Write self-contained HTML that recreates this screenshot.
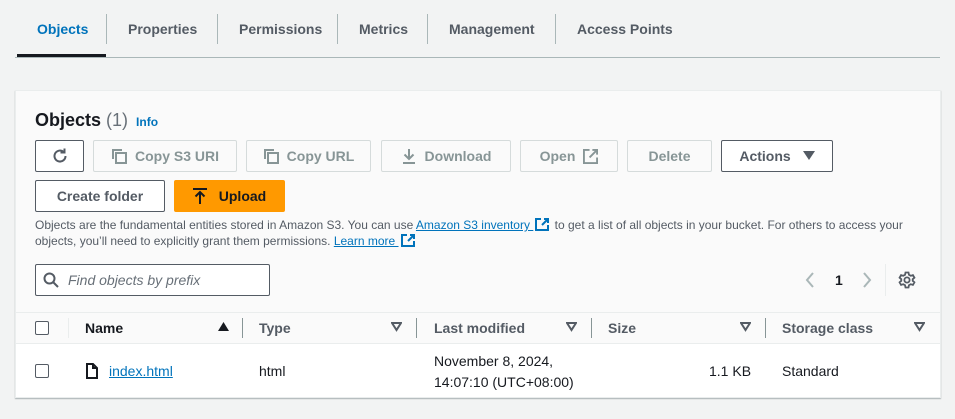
<!DOCTYPE html>
<html><head><meta charset="utf-8"><style>
*{box-sizing:border-box;margin:0;padding:0}
body{width:955px;height:419px;background:#f2f3f3;font-family:"Liberation Sans",sans-serif;position:relative;overflow:hidden;color:#16191f}
.a{position:absolute}
.tab{position:absolute;top:21px;font-size:14px;font-weight:bold;color:#545b64}
.sep{position:absolute;top:14px;width:1px;height:30px;background:#aab7b8}
.btn{position:absolute;height:32px;border:1px solid #d5dbdb;border-radius:2px;font-size:14px;font-weight:bold;color:#879596;display:flex;align-items:center;justify-content:center;gap:8px;background:#fafafa}
.btn.on{border-color:#545b64;color:#545b64;background:#fff}
.th{position:absolute;top:320px;font-size:14px;font-weight:bold;color:#545b64}
.cs{position:absolute;top:318px;width:1px;height:20px;background:#879596}
.cb{position:absolute;width:14px;height:14px;border:1px solid #545b64;border-radius:2px;background:#fff}
.tri{position:absolute;top:322px}
a{color:#0073bb;text-decoration:underline}
.ext{display:inline-block;vertical-align:-2px;margin:0 2px}
</style></head><body>
<div class="tab" style="left:37px;color:#0073bb">Objects</div>
<div class="sep" style="left:106px"></div>
<div class="tab" style="left:128px">Properties</div>
<div class="sep" style="left:217px"></div>
<div class="tab" style="left:239px">Permissions</div>
<div class="sep" style="left:337px"></div>
<div class="tab" style="left:359px">Metrics</div>
<div class="sep" style="left:427px"></div>
<div class="tab" style="left:449px">Management</div>
<div class="sep" style="left:555px"></div>
<div class="tab" style="left:577px">Access Points</div>
<div class="a" style="left:15px;top:57px;width:925px;height:1px;background:#aab7b8"></div>
<div class="a" style="left:17px;top:54px;width:89px;height:3px;background:#16191f"></div>

<div class="a" style="left:15px;top:90px;width:926px;height:308px;background:#fafafa;border:1px solid #eaeded;box-shadow:0 1px 1px rgba(0,28,36,.3)"></div>
<div class="a" style="left:35px;top:110px;font-size:18px;font-weight:bold">Objects <span style="font-weight:normal;color:#687078">(1)</span> <span style="font-size:12px;color:#0073bb;margin-left:3px">Info</span></div>

<div class="btn on" style="left:35px;top:140px;width:49px"><svg width="18" height="18" viewBox="0 0 18 18" fill="none" stroke="#545b64" stroke-width="2"><path d="M14.5 9A5.5 5.5 0 1 1 12.5 4.8"/><path d="M13.5 1.5v4h-4"/></svg></div>
<div class="btn" style="left:93px;top:140px;width:144px"><svg width="16" height="16" viewBox="0 0 16 16" fill="none" stroke="#879596" stroke-width="2"><path d="M2 11V2h9"/><rect x="5" y="5" width="10" height="10"/></svg>Copy S3 URI</div>
<div class="btn" style="left:246px;top:140px;width:125px"><svg width="16" height="16" viewBox="0 0 16 16" fill="none" stroke="#879596" stroke-width="2"><path d="M2 11V2h9"/><rect x="5" y="5" width="10" height="10"/></svg>Copy URL</div>
<div class="btn" style="left:381px;top:140px;width:130px"><svg width="16" height="16" viewBox="0 0 16 16" fill="none" stroke="#879596" stroke-width="2"><path d="M8 1v10M3.5 6.5 8 11l4.5-4.5M2 15h12"/></svg>Download</div>
<div class="btn" style="left:520px;top:140px;width:98px">Open <svg width="15" height="15" viewBox="0 0 16 16" fill="none" stroke="#879596" stroke-width="2"><path d="M7 1H1v14h14V9M10 1h5v5M15 1 7 9"/></svg></div>
<div class="btn" style="left:627px;top:140px;width:85px">Delete</div>
<div class="btn on" style="left:721px;top:140px;width:112px;gap:12px">Actions <svg width="12" height="10" viewBox="0 0 12 10"><path d="M0 0h12L6 9z" fill="#545b64"/></svg></div>

<div class="btn on" style="left:35px;top:180px;width:130px">Create folder</div>
<div class="btn" style="left:174px;top:180px;width:111px;background:#ff9900;border-color:#ff9900;color:#16191f;gap:12px"><svg width="14" height="16" viewBox="0 0 14 16" fill="none" stroke="#16191f" stroke-width="2"><path d="M0 1h14M7 4v12M2.5 8.5 7 4l4.5 4.5"/></svg>Upload</div>

<div class="a" style="left:35px;top:217px;font-size:12px;line-height:16px;color:#545b64;width:900px">Objects are the fundamental entities stored in Amazon S3. You can use <a>Amazon S3 inventory </a><svg class="ext" width="14" height="13" viewBox="0 0 14 13" fill="none" stroke="#0073bb" stroke-width="2"><path d="M6 1H1v11h12V7M9 1h4v4M13 1 7 7"/></svg> to get a list of all objects in your bucket. For others to access your objects, you’ll need to explicitly grant them permissions. <a>Learn more </a><svg class="ext" width="14" height="13" viewBox="0 0 14 13" fill="none" stroke="#0073bb" stroke-width="2"><path d="M6 1H1v11h12V7M9 1h4v4M13 1 7 7"/></svg></div>

<div class="a" style="left:35px;top:264px;width:235px;height:32px;border:1px solid #545b64;border-radius:2px;background:#fff"></div>
<svg class="a" style="left:43px;top:272px" width="16" height="16" viewBox="0 0 16 16" fill="none" stroke="#545b64" stroke-width="2"><circle cx="6.5" cy="6.5" r="5"/><path d="M10 10l5 5"/></svg>
<div class="a" style="left:68px;top:272px;font-size:14px;font-style:italic;color:#687078">Find objects by prefix</div>

<svg class="a" style="left:805px;top:272px" width="10" height="16" viewBox="0 0 10 16" fill="none" stroke="#aab7b8" stroke-width="2"><path d="M8 1 2 8l6 7"/></svg>
<div class="a" style="left:835px;top:272px;font-size:14px;font-weight:bold">1</div>
<svg class="a" style="left:862px;top:272px" width="10" height="16" viewBox="0 0 10 16" fill="none" stroke="#aab7b8" stroke-width="2"><path d="M2 1l6 7-6 7"/></svg>
<div class="a" style="left:885px;top:264px;width:1px;height:32px;background:#eaeded"></div>
<svg class="a" style="left:898px;top:271px" width="18" height="18" viewBox="0 0 24 24" fill="none" stroke="#545b64" stroke-width="2.4"><circle cx="12" cy="12" r="3.5"/><path d="M10 2h4l.6 3 2.4 1.4 2.9-1 2 3.5-2.3 2v2.2l2.3 2-2 3.5-2.9-1-2.4 1.4-.6 3h-4l-.6-3L7 17.6l-2.9 1-2-3.5 2.3-2v-2.2l-2.3-2 2-3.5 2.9 1L9.4 5z"/></svg>

<div class="a" style="left:16px;top:312px;width:924px;height:1px;background:#eaeded"></div>
<div class="a" style="left:16px;top:343px;width:924px;height:1px;background:#eaeded"></div>
<div class="a" style="left:16px;top:344px;width:924px;height:53px;background:#fff"></div>
<div class="cb" style="left:35px;top:321px"></div>
<div class="a" style="left:68px;top:318px;width:1px;height:20px;background:#eaeded"></div>
<div class="th" style="left:85px;color:#16191f">Name</div>
<svg class="tri" style="left:218px" width="11" height="10" viewBox="0 0 11 10"><path d="M0 9h11L5.5 0z" fill="#16191f"/></svg>
<div class="cs" style="left:242px"></div>
<div class="th" style="left:259px">Type</div>
<svg class="tri" style="left:391px" width="11" height="10" viewBox="0 0 11 10" fill="none" stroke="#545b64" stroke-width="2"><path d="M1 1h9L5.5 8z"/></svg>
<div class="cs" style="left:416px"></div>
<div class="th" style="left:434px">Last modified</div>
<svg class="tri" style="left:566px" width="11" height="10" viewBox="0 0 11 10" fill="none" stroke="#545b64" stroke-width="2"><path d="M1 1h9L5.5 8z"/></svg>
<div class="cs" style="left:591px"></div>
<div class="th" style="left:608px">Size</div>
<svg class="tri" style="left:740px" width="11" height="10" viewBox="0 0 11 10" fill="none" stroke="#545b64" stroke-width="2"><path d="M1 1h9L5.5 8z"/></svg>
<div class="cs" style="left:765px"></div>
<div class="th" style="left:782px">Storage class</div>
<svg class="tri" style="left:914px" width="11" height="10" viewBox="0 0 11 10" fill="none" stroke="#545b64" stroke-width="2"><path d="M1 1h9L5.5 8z"/></svg>

<div class="cb" style="left:35px;top:364px"></div>
<svg class="a" style="left:86px;top:363px" width="12" height="16" viewBox="0 0 12 16" fill="none" stroke="#16191f" stroke-width="2"><path d="M1 1h6l4 4v10H1z M7 1v4h4"/></svg>
<div class="a" style="left:109px;top:363px;font-size:14px"><a>index.html</a></div>
<div class="a" style="left:259px;top:363px;font-size:14px">html</div>
<div class="a" style="left:434px;top:351px;font-size:14px;line-height:21px">November 8, 2024,<br>14:07:10 (UTC+08:00)</div>
<div class="a" style="left:709px;top:363px;font-size:14px">1.1 KB</div>
<div class="a" style="left:782px;top:363px;font-size:14px">Standard</div>
</body></html>
